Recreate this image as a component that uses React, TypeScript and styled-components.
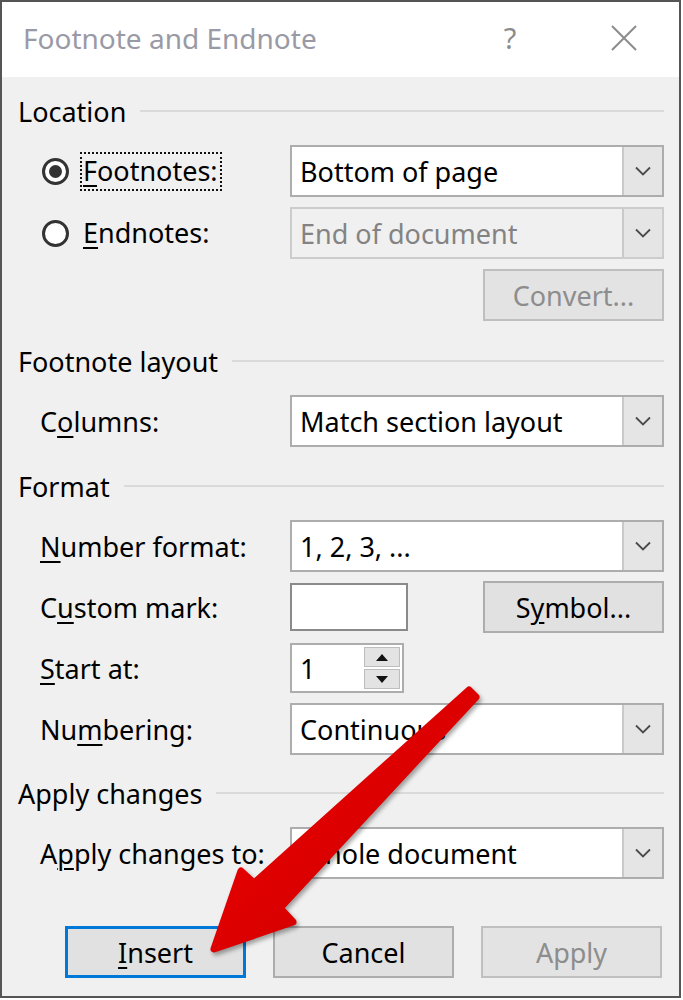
import React from 'react';
import styled, { createGlobalStyle } from 'styled-components';

const GlobalStyle = createGlobalStyle`
  html, body {
    margin: 0;
    padding: 0;
    background: #fff;
  }
  body {
    font-family: "Noto Sans", "Open Sans", sans-serif;
  }
`;

const Page = styled.div`
  position: relative;
  width: 683px;
  height: 1000px;
  overflow: hidden;
`;

const Window = styled.div`
  width: 681px;
  height: 998px;
  box-sizing: border-box;
  border: 2px solid #555;
  background: #f0f0f0;
  display: flex;
  flex-direction: column;
  font-size: 27px;
  color: #000;
`;

const TitleBar = styled.div`
  height: 75px;
  flex: none;
  background: #fff;
  display: flex;
  align-items: center;
  padding-left: 21px;
`;

const Title = styled.div`
  flex: 1;
  font-size: 28px;
  color: #9a9aa6;
  margin-top: -4px;
`;

const HelpMark = styled.div`
  width: 40px;
  text-align: center;
  font-size: 29px;
  color: #8c8c8c;
  margin-right: 72px;
  margin-top: -4px;
`;

const CloseBox = styled.div`
  width: 44px;
  display: flex;
  justify-content: center;
  margin-right: 33px;
  margin-top: -4px;
`;

const Body = styled.div`
  padding: 0 15px 0 16px;
  display: flex;
  flex-direction: column;
`;

const SectionHeader = styled.div<{ $top: number }>`
  height: 34px;
  margin-top: ${p => p.$top}px;
  margin-bottom: 17px;
  display: flex;
  align-items: center;
  white-space: nowrap;

  &::after {
    content: '';
    flex: 1;
    height: 2px;
    background: #dadada;
    margin-left: 14px;
  }
`;

const Rows = styled.div<{ $gap: number }>`
  display: flex;
  flex-direction: column;
  gap: ${p => p.$gap}px;
`;

const Row = styled.div`
  height: 52px;
  display: flex;
  align-items: center;
`;

const Label = styled.div<{ $indent?: number }>`
  width: 272px;
  flex: none;
  box-sizing: border-box;
  padding-left: ${p => p.$indent ?? 22}px;
  display: flex;
  align-items: center;
  white-space: nowrap;
`;

const Key = styled.u`
  text-decoration-thickness: 2px;
  text-underline-offset: 4px;
`;

const Radio = styled.span<{ $checked?: boolean }>`
  width: 27px;
  height: 27px;
  box-sizing: border-box;
  border-radius: 50%;
  border: 3px solid #333;
  background: #fff;
  margin-right: 11px;
  display: flex;
  align-items: center;
  justify-content: center;

  &::after {
    content: '';
    width: 13px;
    height: 13px;
    border-radius: 50%;
    background: ${p => (p.$checked ? '#333' : 'transparent')};
  }
`;

const FocusText = styled.span<{ $focus?: boolean }>`
  padding: 4px 4px 5px 3px;
  outline: ${p => (p.$focus ? '2px dotted #111' : 'none')};
  outline-offset: -2px;
  line-height: 30px;
`;

const Control = styled.div`
  flex: 1;
  display: flex;
  align-items: center;
  height: 100%;
`;

const Select = styled.div<{ $disabled?: boolean }>`
  flex: 1;
  height: 52px;
  box-sizing: border-box;
  border: 2px solid ${p => (p.$disabled ? '#cccccc' : '#adadad')};
  background: ${p => (p.$disabled ? '#f0f0f0' : '#fff')};
  color: ${p => (p.$disabled ? '#838383' : '#000')};
  display: flex;
  align-items: stretch;
`;

const SelectText = styled.div`
  flex: 1;
  padding-left: 8px;
  display: flex;
  align-items: center;
  white-space: nowrap;
  overflow: hidden;
`;

const SelectArrow = styled.div`
  width: 40px;
  box-sizing: border-box;
  background: #e5e5e5;
  border-left: 2px solid #c9c9c9;
  display: flex;
  align-items: center;
  justify-content: center;
`;

const TextBox = styled.div`
  width: 118px;
  height: 48px;
  box-sizing: border-box;
  border: 2px solid #8a8a8a;
  background: #fff;
`;

const Spinner = styled.div`
  width: 114px;
  height: 50px;
  box-sizing: border-box;
  border: 2px solid #adadad;
  background: #fff;
  display: flex;
  align-items: stretch;
`;

const SpinValue = styled.div`
  flex: 1;
  padding-left: 8px;
  display: flex;
  align-items: center;
`;

const SpinButtons = styled.div`
  width: 36px;
  display: flex;
  flex-direction: column;
  gap: 2px;
  padding: 2px 2px 2px 0;
`;

const SpinButton = styled.div`
  flex: 1;
  background: #e3e3e3;
  border: 1px solid #bdbdbd;
  display: flex;
  align-items: center;
  justify-content: center;
`;

const Button = styled.div<{ $disabled?: boolean; $default?: boolean }>`
  width: 181px;
  height: 52px;
  flex: none;
  box-sizing: border-box;
  border: ${p => (p.$default ? '3px solid #0078d7' : `2px solid ${p.$disabled ? '#bfbfbf' : '#adadad'}`)};
  background: ${p => (p.$disabled ? '#e3e3e3' : '#e1e1e1')};
  color: ${p => (p.$disabled ? '#8d8d8d' : '#000')};
  display: flex;
  align-items: center;
  justify-content: center;
  white-space: nowrap;
`;

const PushRight = styled.div`
  margin-left: auto;
  display: flex;
`;

const ButtonBar = styled.div`
  margin-top: 47px;
  display: flex;
  justify-content: flex-end;
  gap: 27px;
  padding-right: 2px;
`;

const ArrowLayer = styled.svg`
  position: absolute;
  left: 0;
  top: 0;
  pointer-events: none;
  filter: drop-shadow(2px 3px 2px rgba(0, 0, 0, 0.35));
`;

const Chevron = () => (
  <svg width="16" height="10" viewBox="0 0 16 10">
    <polyline points="1,1.5 8,8.5 15,1.5" fill="none" stroke="#4a4a4a" strokeWidth="1.8" />
  </svg>
);

const Dropdown = ({ value, disabled }: { value: string; disabled?: boolean }) => (
  <Select $disabled={disabled}>
    <SelectText>{value}</SelectText>
    <SelectArrow>
      <Chevron />
    </SelectArrow>
  </Select>
);

const App = () => {
  return (
    <Page>
      <GlobalStyle />
      <Window>
        <TitleBar>
          <Title>Footnote and Endnote</Title>
          <HelpMark>?</HelpMark>
          <CloseBox>
            <svg width="26" height="26" viewBox="0 0 26 26">
              <path d="M1 1 L25 25 M25 1 L1 25" stroke="#8c8c8c" strokeWidth="2" />
            </svg>
          </CloseBox>
        </TitleBar>

        <Body>
          <SectionHeader $top={17}>Location</SectionHeader>
          <Rows $gap={10}>
            <Row>
              <Label $indent={24}>
                <Radio $checked />
                <FocusText $focus>
                  <Key>F</Key>ootnotes:
                </FocusText>
              </Label>
              <Control>
                <Dropdown value="Bottom of page" />
              </Control>
            </Row>
            <Row>
              <Label $indent={24}>
                <Radio />
                <FocusText>
                  <Key>E</Key>ndnotes:
                </FocusText>
              </Label>
              <Control>
                <Dropdown value="End of document" disabled />
              </Control>
            </Row>
            <Row>
              <Label />
              <Control>
                <PushRight>
                  <Button $disabled>Convert...</Button>
                </PushRight>
              </Control>
            </Row>
          </Rows>

          <SectionHeader $top={23}>Footnote layout</SectionHeader>
          <Rows $gap={10}>
            <Row>
              <Label>
                C<Key>o</Key>lumns:
              </Label>
              <Control>
                <Dropdown value="Match section layout" />
              </Control>
            </Row>
          </Rows>

          <SectionHeader $top={22}>Format</SectionHeader>
          <Rows $gap={9}>
            <Row>
              <Label>
                <Key>N</Key>umber format:
              </Label>
              <Control>
                <Dropdown value="1, 2, 3, ..." />
              </Control>
            </Row>
            <Row>
              <Label>
                C<Key>u</Key>stom mark:
              </Label>
              <Control>
                <TextBox />
                <PushRight>
                  <Button>
                    S<Key>y</Key>mbol...
                  </Button>
                </PushRight>
              </Control>
            </Row>
            <Row>
              <Label>
                <Key>S</Key>tart at:
              </Label>
              <Control>
                <Spinner>
                  <SpinValue>1</SpinValue>
                  <SpinButtons>
                    <SpinButton>
                      <svg width="12" height="7" viewBox="0 0 12 7">
                        <polygon points="6,0 12,7 0,7" fill="#111" />
                      </svg>
                    </SpinButton>
                    <SpinButton>
                      <svg width="12" height="7" viewBox="0 0 12 7">
                        <polygon points="0,0 12,0 6,7" fill="#111" />
                      </svg>
                    </SpinButton>
                  </SpinButtons>
                </Spinner>
              </Control>
            </Row>
            <Row>
              <Label>
                Nu<Key>m</Key>bering:
              </Label>
              <Control>
                <Dropdown value="Continuous" />
              </Control>
            </Row>
          </Rows>

          <SectionHeader $top={21}>Apply changes</SectionHeader>
          <Rows $gap={10}>
            <Row>
              <Label>
                A<Key>p</Key>ply changes to:
              </Label>
              <Control>
                <Dropdown value="Whole document" />
              </Control>
            </Row>
          </Rows>

          <ButtonBar>
            <Button $default>
              <Key>I</Key>nsert
            </Button>
            <Button>Cancel</Button>
            <Button $disabled>Apply</Button>
          </ButtonBar>
        </Body>
      </Window>

      <ArrowLayer width="683" height="1000" viewBox="0 0 683 1000">
        <defs>
          <linearGradient id="arrowFill" x1="0" y1="0" x2="1" y2="1">
            <stop offset="0" stopColor="#f20000" />
            <stop offset="1" stopColor="#c80000" />
          </linearGradient>
        </defs>
        <path
          d="M469 690 L254 883 L241 871 L214 949 L293 922 L280 908 L476 697 Z"
          fill="url(#arrowFill)"
          stroke="url(#arrowFill)"
          strokeWidth="7"
          strokeLinejoin="round"
        />
      </ArrowLayer>
    </Page>
  );
};

export default App;
